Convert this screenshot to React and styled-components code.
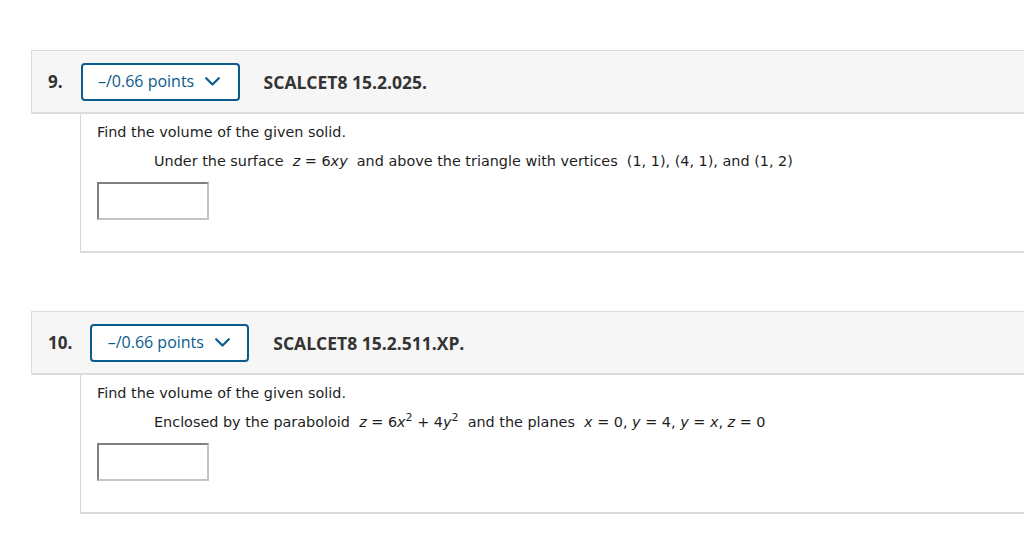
import React from "react";
import styled, { createGlobalStyle } from "styled-components";

const Global = createGlobalStyle`
  html, body { margin: 0; padding: 0; background: #fff; }
  body { overflow: hidden; }
`;

const Page = styled.div`
  padding: 50px 0 0 31px;
  display: flex;
  flex-direction: column;
  gap: 58px;
`;

const Question = styled.section`
  display: flex;
  flex-direction: column;
`;

const Header = styled.div`
  height: 64px;
  box-sizing: border-box;
  background: #f6f6f6;
  border: 1px solid #dcdcdc;
  border-right: none;
  border-bottom-width: 2px;
  display: flex;
  align-items: center;
  padding-left: 16px;
  font-family: "Open Sans", "Noto Sans", sans-serif;
  color: #333;
`;

const Number = styled.span`
  font-weight: 700;
  font-size: 17px;
  margin-right: 18px;
`;

const PointsButton = styled.button`
  box-sizing: border-box;
  width: 159px;
  height: 38px;
  border: 2px solid #0b5b8d;
  border-radius: 4px;
  background: #fff;
  color: #0b5b8d;
  font-family: "Open Sans", "Noto Sans", sans-serif;
  font-size: 16px;
  display: flex;
  align-items: center;
  justify-content: center;
  gap: 11px;
  padding: 0 2px 1px 0;
  margin-right: 24px;
`;

const Title = styled.span`
  font-weight: 700;
  font-size: 17.5px;
  color: #333;
`;

const Body = styled.div`
  margin-left: 49px;
  height: 139px;
  box-sizing: border-box;
  border-left: 1px solid #d6d6d6;
  border-bottom: 2px solid #dadada;
  padding: 8px 0 0 16px;
  font-family: "DejaVu Sans", Verdana, sans-serif;
  font-size: 14.4px;
  color: #1e1e1e;
`;

const Line = styled.div`
  line-height: 20px;
  white-space: nowrap;
`;

const Indented = styled(Line)`
  margin: 9px 0 0 57px;
`;

const Var = styled.i`
  font-style: italic;
`;

const Sup = styled.sup`
  font-size: 11px;
  line-height: 0;
  vertical-align: 6px;
`;

const Answer = styled.input`
  display: block;
  box-sizing: border-box;
  width: 112px;
  height: 38px;
  margin-top: 11px;
  border: 2px solid #c4c4c4;
  border-top-color: #808080;
  border-left-color: #808080;
  background: #fff;
`;

const Chevron = () => (
  <svg width="15" height="9" viewBox="0 0 15 9" fill="none">
    <path d="M1.2 1.2 L7.5 7.5 L13.8 1.2" stroke="#0b5b8d" strokeWidth="2.2" strokeLinecap="round" strokeLinejoin="round" />
  </svg>
);

const QuestionBlock = ({ num, code, children }) => (
  <Question>
    <Header>
      <Number>{num}.</Number>
      <PointsButton>
        <span>–/0.66 points</span>
        <Chevron />
      </PointsButton>
      <Title>{code}</Title>
    </Header>
    <Body>
      <Line>Find the volume of the given solid.</Line>
      <Indented>{children}</Indented>
      <Answer type="text" />
    </Body>
  </Question>
);

export default function App() {
  return (
    <>
      <Global />
      <Page>
        <QuestionBlock num="9" code="SCALCET8 15.2.025.">
          Under the surface&nbsp; <Var>z</Var> = 6<Var>xy</Var>&nbsp; and above the triangle with vertices&nbsp; (1, 1), (4, 1), and (1, 2)
        </QuestionBlock>
        <QuestionBlock num="10" code="SCALCET8 15.2.511.XP.">
          Enclosed by the paraboloid&nbsp; <Var>z</Var> = 6<Var>x</Var><Sup>2</Sup> + 4<Var>y</Var><Sup>2</Sup>&nbsp; and the planes&nbsp; <Var>x</Var> = 0, <Var>y</Var> = 4, <Var>y</Var> = <Var>x</Var>, <Var>z</Var> = 0
        </QuestionBlock>
      </Page>
    </>
  );
}
